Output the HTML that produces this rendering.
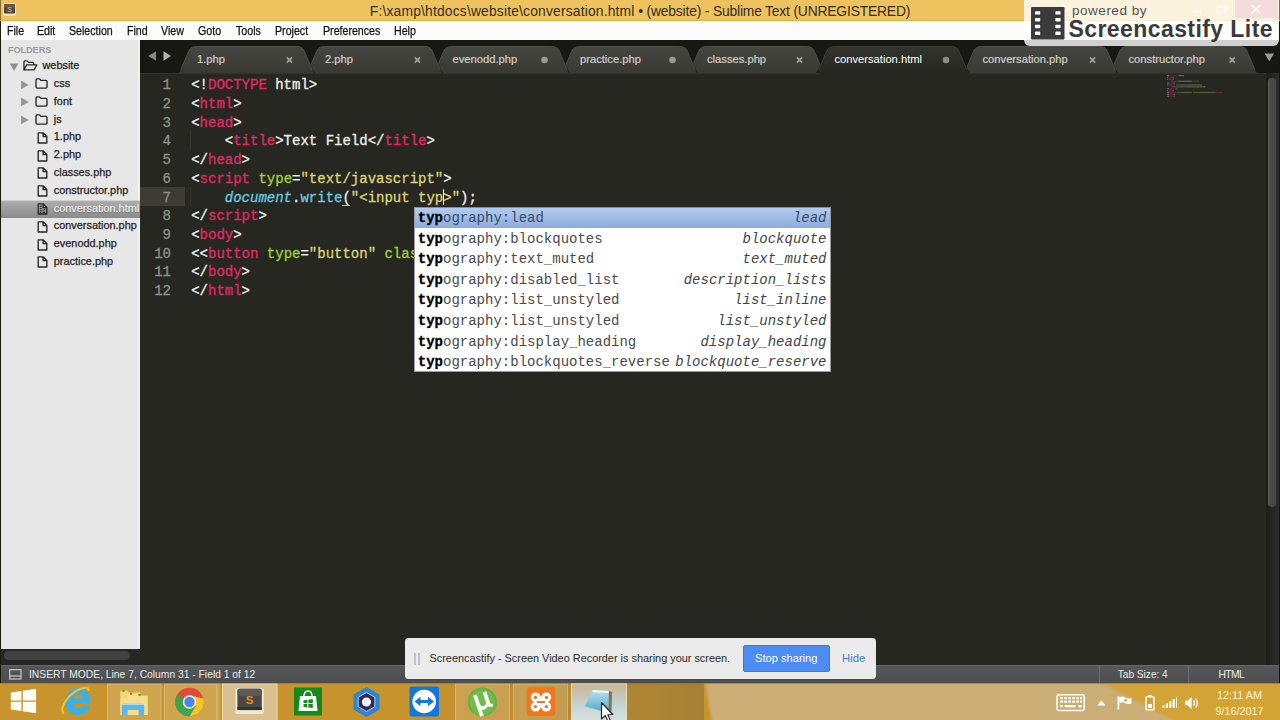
<!DOCTYPE html>
<html><head><meta charset="utf-8">
<style>
*{box-sizing:border-box;margin:0;padding:0}
html,body{width:1280px;height:720px;overflow:hidden;background:#252720;font-family:"Liberation Sans",sans-serif;}
.abs{position:absolute}
#title{left:0;top:0;width:1280px;height:21.2px;background:#EEC35F;}
#title .t{position:absolute;left:0;width:1280px;top:3.3px;text-align:center;font-size:13.83px;color:#332e20;}
#menu{left:1px;top:21.2px;width:1278px;height:19px;background:#fbfbfb;font-size:12.1px;color:#111}
#menu span{position:absolute;top:2.9px;transform:scaleX(0.879);transform-origin:0 0;-webkit-text-stroke:0.25px #111}
#side{left:1px;top:40px;width:139px;height:608.7px;background:#e7e7e7;font-size:10.9px;color:#1e1e1e;overflow:hidden}
#side .row{position:absolute;left:0;width:139px;height:17.8px;line-height:15.4px;white-space:nowrap}
#side .row span{position:absolute;-webkit-text-stroke:0.25px #1e1e1e}
#side .row.sel{background:linear-gradient(#adadad,#8a8a8a);box-shadow:0 -0.7px 0 #c8c8c8}
#side .row.sel span{color:#f0f0f0;-webkit-text-stroke:0.15px #f0f0f0;text-shadow:0 1px 1px rgba(0,0,0,.25)}
#sidescroll{left:1px;top:648.7px;width:139px;height:16.3px;background:#262624}
#sidescroll div{position:absolute;left:3px;top:2.5px;width:125.5px;height:9.3px;border-radius:4.6px;background:#424240}
#tabs{left:140px;top:40px;width:1139px;height:33px;background:#171814}
.tl{font-size:11.2px;white-space:nowrap;-webkit-text-stroke:0.2px}
#code{left:140px;top:76.1px;width:1000px;font-family:"Liberation Mono",monospace;font-size:14px;line-height:18.74px;color:#f0f0ea;white-space:pre;-webkit-text-stroke:0.3px}
#code .ln{display:inline-block;width:31px;text-align:right;color:#8f908a;margin-right:20.2px}
.p{color:#e02a66}.g{color:#a3d03a}.y{color:#ddd47c}.b{color:#6ccbe0;font-style:italic}.bb{color:#6ccbe0}
#status{left:1px;top:664.5px;width:1278px;height:18px;background:linear-gradient(#565759,#4c4d4f);border-top:1px solid #66676a;color:#ececec;font-size:10.3px}
#status span{position:absolute;top:3px;white-space:nowrap}
#task{left:0;top:682.5px;width:1280px;height:37.5px;background:#c6932d;overflow:hidden}

#pop{left:413.5px;top:206.8px;width:417px;height:165.4px;background:#fff;border:1px solid #9a9a9a;border-top-color:#7f8fa8;font-family:"Liberation Mono",monospace;font-size:14px;color:#4a4a4a;overflow:hidden}
#pop .r{position:absolute;left:0;width:415px;height:20.6px;line-height:20.6px;white-space:pre}
#pop .r b{color:#000;-webkit-text-stroke:0.3px #000}
#pop .r i{position:absolute;right:3px;top:0.9px;color:#444}
#pop .r span{position:absolute;left:3.3px;top:0.9px}
#pop .r.s{background:linear-gradient(#b4ccef,#8cacdd);color:#3a4a66}
#pop .r.s i{color:#3a4a66}
#banner{left:404.5px;top:638px;width:471.5px;height:40.5px;background:#ebebeb;border-radius:3.5px;font-size:10.9px;color:#2a2a2a;box-shadow:0 0 1px rgba(0,0,0,.3)}
#banner span{position:absolute;white-space:nowrap}
#stop{position:absolute;left:338px;top:7px;width:87.5px;height:26.5px;background:#4c8df4;border-radius:2px;border:1px solid #3b78de;color:#fff;text-align:center;line-height:25.5px;font-size:11.1px}

#ov{left:1023.5px;top:-6px;width:255px;height:51.5px;background:rgba(255,255,255,.8);border-radius:6px}
#ov .pb{position:absolute;left:48.5px;top:8.9px;font-size:13.6px;color:#555;letter-spacing:0.47px;white-space:nowrap}
#ov .sc{position:absolute;left:45px;top:22.2px;font-size:23px;font-weight:bold;color:#3a3a3a;letter-spacing:0.42px;white-space:nowrap}
</style></head><body>
<svg width="0" height="0" style="position:absolute"><defs>
<linearGradient id="gi" x1="0" y1="0" x2="0" y2="1"><stop offset="0" stop-color="#45463f"/><stop offset="1" stop-color="#383933"/></linearGradient>
<linearGradient id="ga" x1="0" y1="0" x2="0" y2="1"><stop offset="0" stop-color="#34352e"/><stop offset="1" stop-color="#252720"/></linearGradient>
</defs></svg>
<div id="title" class="abs"><svg class="abs" style="left:2.8px;top:3.2px" width="13" height="13" viewBox="0 0 13 13"><rect x="0.3" y="0.3" width="12.4" height="12.4" rx="1.2" fill="#efe4c4"/><rect x="1" y="1" width="11" height="9.6" rx="1" fill="#4a4844"/><rect x="1" y="1" width="11" height="3.4" rx="1" fill="#5d5a54"/><text x="6.5" y="9" font-family="Liberation Sans" font-weight="bold" font-size="7.5" fill="#e8962a" text-anchor="middle">S</text></svg><div class="t"><span style="letter-spacing:0.18px">F:\xamp\htdocs\website\conversation.html</span><span style="letter-spacing:-0.17px"> • (website) - Sublime Text (UNREGISTERED)</span></div></div>
<div id="menu" class="abs">
<span style="left:5.8px">File</span><span style="left:36px">Edit</span><span style="left:67.8px">Selection</span><span style="left:125.8px">Find</span><span style="left:160.2px">View</span><span style="left:197px">Goto</span><span style="left:234.5px">Tools</span><span style="left:274px">Project</span><span style="left:322px">Preferences</span><span style="left:393px">Help</span>
</div>
<div id="side" class="abs"><div class="abs" style="left:137.4px;top:0;width:1.6px;height:608.7px;background:#f1f1ed"></div><div class="abs" style="left:7px;top:4.5px;font-size:9.2px;color:#9b9b9b;font-weight:bold;letter-spacing:-0.1px">FOLDERS</div><div class="row" style="top:17.6px"><svg class="abs" style="left:8.4px;top:5.6px" width="10.6" height="9" viewBox="0 0 10 9"><path d="M0.5,0.5 L9,0.5 L4.75,8 Z" fill="#8e8e8e"/></svg><svg class="abs" style="left:22.1px;top:2.9px" width="15" height="11" viewBox="0 0 16 11" preserveAspectRatio="none"><path d="M1,9.6 L1,2 Q1,0.9 2.1,0.9 L4.4,0.9 L5.6,2.3 L10.4,2.3 Q11.4,2.3 11.4,3.4 L11.4,4.6 M1,9.8 L3.8,4.8 L14.8,4.8 L11.8,9.9 L1,9.9 Z" fill="none" stroke="#262626" stroke-width="1.35" stroke-linejoin="round"/></svg><span style="left:41.5px">website</span></div><div class="row" style="top:35.9px"><svg class="abs" style="left:19.4px;top:3.7px" width="9.8" height="9.8" viewBox="0 0 9 9"><path d="M1,0.5 L8,4.5 L1,8.5 Z" fill="#979797"/></svg><svg class="abs" style="left:34.2px;top:2.4px" width="13" height="11" viewBox="0 0 13 11"><path d="M1,2.2 Q1,0.9 2.2,0.9 L4.6,0.9 L5.8,2.4 L10.8,2.4 Q12,2.4 12,3.6 L12,9 Q12,10.1 10.8,10.1 L2.2,10.1 Q1,10.1 1,9 Z" fill="none" stroke="#262626" stroke-width="1.35" stroke-linejoin="round"/></svg><span style="left:52.8px">css</span></div><div class="row" style="top:53.7px"><svg class="abs" style="left:19.4px;top:3.7px" width="9.8" height="9.8" viewBox="0 0 9 9"><path d="M1,0.5 L8,4.5 L1,8.5 Z" fill="#979797"/></svg><svg class="abs" style="left:34.2px;top:2.4px" width="13" height="11" viewBox="0 0 13 11"><path d="M1,2.2 Q1,0.9 2.2,0.9 L4.6,0.9 L5.8,2.4 L10.8,2.4 Q12,2.4 12,3.6 L12,9 Q12,10.1 10.8,10.1 L2.2,10.1 Q1,10.1 1,9 Z" fill="none" stroke="#262626" stroke-width="1.35" stroke-linejoin="round"/></svg><span style="left:52.8px">font</span></div><div class="row" style="top:71.5px"><svg class="abs" style="left:19.4px;top:3.7px" width="9.8" height="9.8" viewBox="0 0 9 9"><path d="M1,0.5 L8,4.5 L1,8.5 Z" fill="#979797"/></svg><svg class="abs" style="left:34.2px;top:2.4px" width="13" height="11" viewBox="0 0 13 11"><path d="M1,2.2 Q1,0.9 2.2,0.9 L4.6,0.9 L5.8,2.4 L10.8,2.4 Q12,2.4 12,3.6 L12,9 Q12,10.1 10.8,10.1 L2.2,10.1 Q1,10.1 1,9 Z" fill="none" stroke="#262626" stroke-width="1.35" stroke-linejoin="round"/></svg><span style="left:52.8px">js</span></div><div class="row" style="top:89.3px"><svg class="abs" style="left:35.8px;top:2.5px" width="11" height="12" viewBox="0 0 11 12"><path d="M1.2,0.9 L6.3,0.9 L9.8,4.4 L9.8,11 L1.2,11 Z M6.1,1 L6.1,4.6 L9.7,4.6" fill="none" stroke="#262626" stroke-width="1.35" stroke-linejoin="round"/></svg><span style="left:52.8px">1.php</span></div><div class="row" style="top:107.1px"><svg class="abs" style="left:35.8px;top:2.5px" width="11" height="12" viewBox="0 0 11 12"><path d="M1.2,0.9 L6.3,0.9 L9.8,4.4 L9.8,11 L1.2,11 Z M6.1,1 L6.1,4.6 L9.7,4.6" fill="none" stroke="#262626" stroke-width="1.35" stroke-linejoin="round"/></svg><span style="left:52.8px">2.php</span></div><div class="row" style="top:124.9px"><svg class="abs" style="left:35.8px;top:2.5px" width="11" height="12" viewBox="0 0 11 12"><path d="M1.2,0.9 L6.3,0.9 L9.8,4.4 L9.8,11 L1.2,11 Z M6.1,1 L6.1,4.6 L9.7,4.6" fill="none" stroke="#262626" stroke-width="1.35" stroke-linejoin="round"/></svg><span style="left:52.8px">classes.php</span></div><div class="row" style="top:142.7px"><svg class="abs" style="left:35.8px;top:2.5px" width="11" height="12" viewBox="0 0 11 12"><path d="M1.2,0.9 L6.3,0.9 L9.8,4.4 L9.8,11 L1.2,11 Z M6.1,1 L6.1,4.6 L9.7,4.6" fill="none" stroke="#262626" stroke-width="1.35" stroke-linejoin="round"/></svg><span style="left:52.8px">constructor.php</span></div><div class="row sel" style="top:160.5px"><svg class="abs" style="left:35.8px;top:2.5px" width="11" height="12" viewBox="0 0 11 12"><path d="M1.2,0.9 L6.3,0.9 L9.8,4.4 L9.8,11 L1.2,11 Z M6.1,1 L6.1,4.6 L9.7,4.6" fill="none" stroke="#262626" stroke-width="1.35" stroke-linejoin="round"/><path d="M2.8,3.4 h2 M2.8,5.6 h2 M2.8,7.8 h2.4 M6.2,7.4 l1.8,-1.2 M2.8,9.6 h1.4 M5.6,9.4 h2.6" stroke="#262626" stroke-width="1.1" fill="none"/></svg><span style="left:52.8px">conversation.html</span></div><div class="row" style="top:178.3px"><svg class="abs" style="left:35.8px;top:2.5px" width="11" height="12" viewBox="0 0 11 12"><path d="M1.2,0.9 L6.3,0.9 L9.8,4.4 L9.8,11 L1.2,11 Z M6.1,1 L6.1,4.6 L9.7,4.6" fill="none" stroke="#262626" stroke-width="1.35" stroke-linejoin="round"/></svg><span style="left:52.8px">conversation.php</span></div><div class="row" style="top:196.1px"><svg class="abs" style="left:35.8px;top:2.5px" width="11" height="12" viewBox="0 0 11 12"><path d="M1.2,0.9 L6.3,0.9 L9.8,4.4 L9.8,11 L1.2,11 Z M6.1,1 L6.1,4.6 L9.7,4.6" fill="none" stroke="#262626" stroke-width="1.35" stroke-linejoin="round"/></svg><span style="left:52.8px">evenodd.php</span></div><div class="row" style="top:213.9px"><svg class="abs" style="left:35.8px;top:2.5px" width="11" height="12" viewBox="0 0 11 12"><path d="M1.2,0.9 L6.3,0.9 L9.8,4.4 L9.8,11 L1.2,11 Z M6.1,1 L6.1,4.6 L9.7,4.6" fill="none" stroke="#262626" stroke-width="1.35" stroke-linejoin="round"/></svg><span style="left:52.8px">practice.php</span></div></div>
<div id="sidescroll" class="abs"><div></div></div>
<div id="tabs" class="abs"></div>
<svg class="abs" style="left:148px;top:50.3px" width="24" height="12" viewBox="0 0 24 12"><path d="M0.5,6 L8,1.2 L8,10.8 Z" fill="#8a8a85"/><path d="M23,6 L15.5,1.2 L15.5,10.8 Z" fill="#b4b4ae"/></svg>
<svg class="abs" style="left:1108.5px;top:45.5px" width="148.7" height="27" viewBox="0 0 148.7 27"><path d="M0,27 C1.3,27 2,25.8 2.8,23.8 L10.6,5.2 C12,2 14,0.5 18.5,0.5 L130.2,0.5 C134.7,0.5 136.7,2 138.1,5.2 L145.89999999999998,23.8 C146.7,25.8 147.39999999999998,27 148.7,27 Z" fill="url(#gi)" stroke="#14150f" stroke-width="1.6" stroke-opacity=".8" paint-order="stroke"/><path d="M2.8,23.8 L10.6,5.2 C12,2 14,0.5 18.5,0.5 L130.2,0.5 C134.7,0.5 136.7,2 138.1,5.2 L145.89999999999998,23.8" fill="none" stroke="#4a4b45" stroke-width="1"/><path d="M120.6,11.4 L125.79999999999998,16.6 M125.79999999999998,11.4 L120.6,16.6" stroke="#a4a49e" stroke-width="1.7" fill="none"/></svg><div class="abs tl" style="left:1128.5px;top:53px;color:#d0d0cb;">constructor.php</div><svg class="abs" style="left:962.5px;top:45.5px" width="155" height="27" viewBox="0 0 155 27"><path d="M0,27 C1.3,27 2,25.8 2.8,23.8 L10.6,5.2 C12,2 14,0.5 18.5,0.5 L136.5,0.5 C141,0.5 143,2 144.4,5.2 L152.2,23.8 C153,25.8 153.7,27 155,27 Z" fill="url(#gi)" stroke="#14150f" stroke-width="1.6" stroke-opacity=".8" paint-order="stroke"/><path d="M2.8,23.8 L10.6,5.2 C12,2 14,0.5 18.5,0.5 L136.5,0.5 C141,0.5 143,2 144.4,5.2 L152.2,23.8" fill="none" stroke="#4a4b45" stroke-width="1"/><path d="M126.9,11.4 L132.1,16.6 M132.1,11.4 L126.9,16.6" stroke="#a4a49e" stroke-width="1.7" fill="none"/></svg><div class="abs tl" style="left:982.5px;top:53px;color:#d0d0cb;">conversation.php</div><svg class="abs" style="left:687.5px;top:45.5px" width="137" height="27" viewBox="0 0 137 27"><path d="M0,27 C1.3,27 2,25.8 2.8,23.8 L10.6,5.2 C12,2 14,0.5 18.5,0.5 L118.5,0.5 C123,0.5 125,2 126.4,5.2 L134.2,23.8 C135,25.8 135.7,27 137,27 Z" fill="url(#gi)" stroke="#14150f" stroke-width="1.6" stroke-opacity=".8" paint-order="stroke"/><path d="M2.8,23.8 L10.6,5.2 C12,2 14,0.5 18.5,0.5 L118.5,0.5 C123,0.5 125,2 126.4,5.2 L134.2,23.8" fill="none" stroke="#4a4b45" stroke-width="1"/><path d="M108.9,11.4 L114.1,16.6 M114.1,11.4 L108.9,16.6" stroke="#a4a49e" stroke-width="1.7" fill="none"/></svg><div class="abs tl" style="left:707.0px;top:53px;color:#d0d0cb;">classes.php</div><svg class="abs" style="left:560.5px;top:45.5px" width="137" height="27" viewBox="0 0 137 27"><path d="M0,27 C1.3,27 2,25.8 2.8,23.8 L10.6,5.2 C12,2 14,0.5 18.5,0.5 L118.5,0.5 C123,0.5 125,2 126.4,5.2 L134.2,23.8 C135,25.8 135.7,27 137,27 Z" fill="url(#gi)" stroke="#14150f" stroke-width="1.6" stroke-opacity=".8" paint-order="stroke"/><path d="M2.8,23.8 L10.6,5.2 C12,2 14,0.5 18.5,0.5 L118.5,0.5 C123,0.5 125,2 126.4,5.2 L134.2,23.8" fill="none" stroke="#4a4b45" stroke-width="1"/><circle cx="111.5" cy="14" r="3.3" fill="#9a9a94"/></svg><div class="abs tl" style="left:580.0px;top:53px;color:#d0d0cb;">practice.php</div><svg class="abs" style="left:433px;top:45.5px" width="137" height="27" viewBox="0 0 137 27"><path d="M0,27 C1.3,27 2,25.8 2.8,23.8 L10.6,5.2 C12,2 14,0.5 18.5,0.5 L118.5,0.5 C123,0.5 125,2 126.4,5.2 L134.2,23.8 C135,25.8 135.7,27 137,27 Z" fill="url(#gi)" stroke="#14150f" stroke-width="1.6" stroke-opacity=".8" paint-order="stroke"/><path d="M2.8,23.8 L10.6,5.2 C12,2 14,0.5 18.5,0.5 L118.5,0.5 C123,0.5 125,2 126.4,5.2 L134.2,23.8" fill="none" stroke="#4a4b45" stroke-width="1"/><circle cx="111.5" cy="14" r="3.3" fill="#9a9a94"/></svg><div class="abs tl" style="left:452.5px;top:53px;color:#d0d0cb;">evenodd.php</div><svg class="abs" style="left:305.5px;top:45.5px" width="137" height="27" viewBox="0 0 137 27"><path d="M0,27 C1.3,27 2,25.8 2.8,23.8 L10.6,5.2 C12,2 14,0.5 18.5,0.5 L118.5,0.5 C123,0.5 125,2 126.4,5.2 L134.2,23.8 C135,25.8 135.7,27 137,27 Z" fill="url(#gi)" stroke="#14150f" stroke-width="1.6" stroke-opacity=".8" paint-order="stroke"/><path d="M2.8,23.8 L10.6,5.2 C12,2 14,0.5 18.5,0.5 L118.5,0.5 C123,0.5 125,2 126.4,5.2 L134.2,23.8" fill="none" stroke="#4a4b45" stroke-width="1"/><path d="M108.9,11.4 L114.1,16.6 M114.1,11.4 L108.9,16.6" stroke="#a4a49e" stroke-width="1.7" fill="none"/></svg><div class="abs tl" style="left:325.0px;top:53px;color:#d0d0cb;">2.php</div><svg class="abs" style="left:177.5px;top:45.5px" width="137" height="27" viewBox="0 0 137 27"><path d="M0,27 C1.3,27 2,25.8 2.8,23.8 L10.6,5.2 C12,2 14,0.5 18.5,0.5 L118.5,0.5 C123,0.5 125,2 126.4,5.2 L134.2,23.8 C135,25.8 135.7,27 137,27 Z" fill="url(#gi)" stroke="#14150f" stroke-width="1.6" stroke-opacity=".8" paint-order="stroke"/><path d="M2.8,23.8 L10.6,5.2 C12,2 14,0.5 18.5,0.5 L118.5,0.5 C123,0.5 125,2 126.4,5.2 L134.2,23.8" fill="none" stroke="#4a4b45" stroke-width="1"/><path d="M108.9,11.4 L114.1,16.6 M114.1,11.4 L108.9,16.6" stroke="#a4a49e" stroke-width="1.7" fill="none"/></svg><div class="abs tl" style="left:197.0px;top:53px;color:#d0d0cb;">1.php</div><svg class="abs" style="left:816.2px;top:45.5px" width="153.6" height="27" viewBox="0 0 153.6 27"><path d="M0,27 C1.3,27 2,25.8 2.8,23.8 L10.6,5.2 C12,2 14,0.5 18.5,0.5 L135.1,0.5 C139.6,0.5 141.6,2 143.0,5.2 L150.79999999999998,23.8 C151.6,25.8 152.29999999999998,27 153.6,27 Z" fill="url(#ga)" stroke="#14150f" stroke-width="1.6" stroke-opacity=".8" paint-order="stroke"/><path d="M2.8,23.8 L10.6,5.2 C12,2 14,0.5 18.5,0.5 L135.1,0.5 C139.6,0.5 141.6,2 143.0,5.2 L150.79999999999998,23.8" fill="none" stroke="#3c3d37" stroke-width="1"/><circle cx="130.0" cy="14" r="3.3" fill="#8c8c86"/></svg><div class="abs tl" style="left:834.4000000000001px;top:53px;color:#ffffff;-webkit-text-stroke:0">conversation.html</div>
<div class="abs" style="left:140px;top:72.5px;width:1139px;height:1px;background:#31322c"></div><div class="abs" style="left:817.5px;top:72.3px;width:151px;height:1.4px;background:#252720"></div>
<div class="abs" style="left:140px;top:187.2px;width:45px;height:18.7px;background:#3d3c32"></div>
<div class="abs" style="left:190.3px;top:131px;width:1px;height:18.7px;background:#34352f"></div><div class="abs" style="left:190.3px;top:187.2px;width:1px;height:18.7px;background:#34352f"></div><div id="code" class="abs"><span class="ln">1</span>&lt;!<span class="p">DOCTYPE</span> html&gt;
<span class="ln">2</span>&lt;<span class="p">html</span>&gt;
<span class="ln">3</span>&lt;<span class="p">head</span>&gt;
<span class="ln">4</span>    &lt;<span class="p">title</span>&gt;Text Field&lt;/<span class="p">title</span>&gt;
<span class="ln">5</span>&lt;/<span class="p">head</span>&gt;
<span class="ln">6</span>&lt;<span class="p">script</span> <span class="g">type</span>=<span class="y">"text/javascript"</span>&gt;
<span class="ln">7</span>    <span class="b">document</span>.<span class="bb">write</span>(<span class="y">"&lt;input typ&gt;"</span>);
<span class="ln">8</span>&lt;/<span class="p">script</span>&gt;
<span class="ln">9</span>&lt;<span class="p">body</span>&gt;
<span class="ln">10</span>&lt;&lt;<span class="p">button</span> <span class="g">type</span>=<span class="y">"button"</span> <span class="g">clas</span>
<span class="ln">11</span>&lt;/<span class="p">body</span>&gt;
<span class="ln">12</span>&lt;/<span class="p">html</span>&gt;
</div>
<div id="pop" class="abs"><div class="r s" style="top:-0.6px"><span><b>typ</b>ography:lead</span><i>lead</i></div><div class="r" style="top:20.0px"><span><b>typ</b>ography:blockquotes</span><i>blockquote</i></div><div class="r" style="top:40.6px"><span><b>typ</b>ography:text_muted</span><i>text_muted</i></div><div class="r" style="top:61.2px"><span><b>typ</b>ography:disabled_list</span><i>description_lists</i></div><div class="r" style="top:81.8px"><span><b>typ</b>ography:list_unstyled</span><i>list_inline</i></div><div class="r" style="top:102.4px"><span><b>typ</b>ography:list_unstyled</span><i>list_unstyled</i></div><div class="r" style="top:123.0px"><span><b>typ</b>ography:display_heading</span><i>display_heading</i></div><div class="r" style="top:143.6px"><span><b>typ</b>ography:blockquotes_reverse</span><i>blockquote_reserve</i></div></div>
<div id="status" class="abs"><span style="left:28px">INSERT MODE, Line 7, Column 31 - Field 1 of 12</span><span style="left:1116.8px;font-size:10.1px">Tab Size: 4</span><span style="left:1217.5px;letter-spacing:-0.6px">HTML</span></div>
<svg class="abs" style="left:1263.5px;top:53px" width="11" height="9" viewBox="0 0 11 9"><path d="M0.5,0.5 L10,0.5 L5.25,8.2 Z" fill="#9c9c96"/></svg>
<div class="abs" style="left:1265.5px;top:73px;width:13.5px;height:591.5px;background:linear-gradient(to right,#1c1d19,#2d2d2b)"></div>
<div class="abs" style="left:1268.3px;top:77.5px;width:7.6px;height:429px;border-radius:3.8px;background:linear-gradient(to right,#5c5c5a,#484846 30%,#454543)"></div>
<div class="abs" style="left:1279px;top:21px;width:1px;height:662px;background:#15150f"></div>
<div class="abs" style="left:0px;top:21px;width:1px;height:699px;background:#1a1912"></div>
<div class="abs" style="left:0px;top:0px;width:1px;height:21px;background:#8a6f30"></div><div class="abs" style="left:1279px;top:0px;width:1px;height:21px;background:#8a6f30"></div>
<div class="abs" style="left:0px;top:20px;width:1280px;height:1.2px;background:#ddb04c"></div>
<svg class="abs" style="left:1166.5px;top:73.6px;opacity:.42" width="60" height="24" viewBox="0 0 60 24"><rect x="0.00" y="1.00" width="2.26" height="1.3" fill="#b8b8b0"/><rect x="2.26" y="1.00" width="7.91" height="1.3" fill="#b8285a"/><rect x="11.30" y="1.00" width="4.52" height="1.3" fill="#b8b8b0"/><rect x="15.82" y="1.00" width="1.13" height="1.3" fill="#b8b8b0"/><rect x="0.00" y="2.87" width="1.13" height="1.3" fill="#b8b8b0"/><rect x="1.13" y="2.87" width="4.52" height="1.3" fill="#b8285a"/><rect x="5.65" y="2.87" width="1.13" height="1.3" fill="#b8b8b0"/><rect x="0.00" y="4.74" width="1.13" height="1.3" fill="#b8b8b0"/><rect x="1.13" y="4.74" width="4.52" height="1.3" fill="#b8285a"/><rect x="5.65" y="4.74" width="1.13" height="1.3" fill="#b8b8b0"/><rect x="4.52" y="6.61" width="1.13" height="1.3" fill="#b8b8b0"/><rect x="5.65" y="6.61" width="5.65" height="1.3" fill="#b8285a"/><rect x="11.30" y="6.61" width="13.56" height="1.3" fill="#b8b8b0"/><rect x="24.86" y="6.61" width="5.65" height="1.3" fill="#b8285a"/><rect x="30.51" y="6.61" width="1.13" height="1.3" fill="#b8b8b0"/><rect x="0.00" y="8.48" width="2.26" height="1.3" fill="#b8b8b0"/><rect x="2.26" y="8.48" width="4.52" height="1.3" fill="#b8285a"/><rect x="6.78" y="8.48" width="1.13" height="1.3" fill="#b8b8b0"/><rect x="0.00" y="10.35" width="1.13" height="1.3" fill="#b8b8b0"/><rect x="1.13" y="10.35" width="6.78" height="1.3" fill="#b8285a"/><rect x="9.04" y="10.35" width="4.52" height="1.3" fill="#7a9a30"/><rect x="13.56" y="10.35" width="1.13" height="1.3" fill="#b8b8b0"/><rect x="14.69" y="10.35" width="19.21" height="1.3" fill="#a8a060"/><rect x="33.90" y="10.35" width="1.13" height="1.3" fill="#b8b8b0"/><rect x="4.52" y="12.22" width="9.04" height="1.3" fill="#4a98a8"/><rect x="13.56" y="12.22" width="1.13" height="1.3" fill="#b8b8b0"/><rect x="14.69" y="12.22" width="5.65" height="1.3" fill="#4a98a8"/><rect x="20.34" y="12.22" width="1.13" height="1.3" fill="#b8b8b0"/><rect x="21.47" y="12.22" width="14.69" height="1.3" fill="#a8a060"/><rect x="36.16" y="12.22" width="2.26" height="1.3" fill="#b8b8b0"/><rect x="0.00" y="14.09" width="2.26" height="1.3" fill="#b8b8b0"/><rect x="2.26" y="14.09" width="6.78" height="1.3" fill="#b8285a"/><rect x="9.04" y="14.09" width="1.13" height="1.3" fill="#b8b8b0"/><rect x="0.00" y="15.96" width="1.13" height="1.3" fill="#b8b8b0"/><rect x="1.13" y="15.96" width="4.52" height="1.3" fill="#b8285a"/><rect x="5.65" y="15.96" width="1.13" height="1.3" fill="#b8b8b0"/><rect x="0.00" y="17.83" width="2.26" height="1.3" fill="#b8b8b0"/><rect x="2.26" y="17.83" width="6.78" height="1.3" fill="#b8285a"/><rect x="10.17" y="17.83" width="4.52" height="1.3" fill="#7a9a30"/><rect x="14.69" y="17.83" width="1.13" height="1.3" fill="#b8b8b0"/><rect x="15.82" y="17.83" width="9.04" height="1.3" fill="#a8a060"/><rect x="25.99" y="17.83" width="5.65" height="1.3" fill="#7a9a30"/><rect x="31.64" y="17.83" width="1.13" height="1.3" fill="#b8b8b0"/><rect x="32.77" y="17.83" width="14.69" height="1.3" fill="#a8a060"/><rect x="47.46" y="17.83" width="1.13" height="1.3" fill="#b8b8b0"/><rect x="48.59" y="17.83" width="1.13" height="1.3" fill="#b8285a"/><rect x="50.85" y="17.83" width="4.52" height="1.3" fill="#b8285a"/><rect x="0.00" y="19.70" width="2.26" height="1.3" fill="#b8b8b0"/><rect x="2.26" y="19.70" width="4.52" height="1.3" fill="#b8285a"/><rect x="6.78" y="19.70" width="1.13" height="1.3" fill="#b8b8b0"/><rect x="0.00" y="21.57" width="2.26" height="1.3" fill="#b8b8b0"/><rect x="2.26" y="21.57" width="4.52" height="1.3" fill="#b8285a"/><rect x="6.78" y="21.57" width="1.13" height="1.3" fill="#b8b8b0"/></svg>
<svg class="abs" style="left:9px;top:669px" width="13" height="11" viewBox="0 0 13 11"><rect x="0.7" y="0.7" width="11.3" height="9.3" fill="none" stroke="#c8c8c8" stroke-width="1.2"/><path d="M0.7,7 h11.3" stroke="#c8c8c8" stroke-width="1.2"/></svg>
<div class="abs" style="left:1098.5px;top:665px;width:1px;height:18px;background:#6c6d6e"></div>
<div class="abs" style="left:1187.5px;top:665px;width:1px;height:18px;background:#6c6d6e"></div>
<div class="abs" style="left:442.9px;top:188.5px;width:1.4px;height:16.5px;background:#f8f8f0"></div>
<div class="abs" style="left:342.3px;top:204.6px;width:8px;height:1.2px;background:#c8c8c0"></div>
<div id="banner" class="abs"><div class="abs" style="left:9.3px;top:14.5px;width:1.8px;height:12px;background:#c2c2c2"></div><div class="abs" style="left:13.3px;top:14.5px;width:1.8px;height:12px;background:#c2c2c2"></div><span style="left:25px;top:14.4px">Screencastify - Screen Video Recorder is sharing your screen.</span><div id="stop">Stop sharing</div><span style="left:437.5px;top:14.2px;color:#4a7bd0;font-size:11.3px">Hide</span></div>
<div id="task" class="abs"><svg class="abs" style="left:0;top:0" width="1280" height="37.5" viewBox="0 682.5 1280 37.5">
<defs>
<linearGradient id="tg1" x1="0" y1="0" x2="1" y2="0"><stop offset="0" stop-color="#c7942d"/><stop offset="0.6" stop-color="#c6932d"/><stop offset="0.8" stop-color="#b88a31"/><stop offset="1" stop-color="#a58137"/></linearGradient>
<linearGradient id="hov" x1="0" y1="0" x2="0" y2="1"><stop offset="0" stop-color="#c9b58e"/><stop offset="0.55" stop-color="#c4d2d0"/><stop offset="1" stop-color="#d6e2e2"/></linearGradient>
<linearGradient id="np" x1="0" y1="0" x2="0" y2="1"><stop offset="0" stop-color="#b8e0ee"/><stop offset="1" stop-color="#4fa8cc"/></linearGradient>
</defs>
<rect x="0" y="682" width="704" height="38" fill="url(#tg1)"/>
<filter id="bl" x="-5%" y="-50%" width="110%" height="200%"><feGaussianBlur stdDeviation="1.6"/></filter><g filter="url(#bl)"><path d="M703,670 L1078,670 L1200,733 L714,733 Z" fill="#caae76"/>
<path d="M1078,670 L1300,670 L1300,733 L1200,733 Z" fill="#d3a336"/></g>
<rect x="0" y="682.5" width="1280" height="1" fill="#8c6e30" opacity=".55"/>
<!-- windows logo -->
<path d="M10.8,692 L21.4,690.4 L21.4,699.9 L10.8,699.9 Z M22.8,690.2 L36.1,688.3 L36.1,699.9 L22.8,699.9 Z M10.8,701.2 L21.4,701.2 L21.4,710.6 L10.8,709.1 Z M22.8,701.2 L36.1,701.2 L36.1,712.7 L22.8,710.8 Z" fill="#fffdf4"/>
<!-- IE -->
<g>
<g transform="translate(77.8,701.7) scale(1.24) translate(-76.3,-703)"><path d="M66.5,702 A10,10 0 1 1 86.2,704 L72.5,704 A4.6,4.6 0 0 0 80.8,706.2 L86,706.2 A10,10 0 0 1 66.5,702 Z M72.4,699.8 L80.8,699.8 A4.3,4.3 0 0 0 72.4,699.8 Z" fill="#35b2ec"/></g>
<path d="M63.2,712.6 C59.5,707 68,694.5 78,689.5 C84,686.5 88.5,686.6 88.6,689.6" fill="none" stroke="#f5c030" stroke-width="2" stroke-linecap="round"/>
</g>
<!-- explorer button -->
<rect x="107.5" y="683.6" width="53.5" height="37" fill="#fff" fill-opacity=".16" stroke="#fff" stroke-opacity=".28" stroke-width="1"/>
<g>
<path d="M120.3,690.2 L127.5,690.2 L129,692 L140,692 L140,712 L120.3,712 Z" fill="#f2d677"/>
<path d="M127,693 L135.5,693 L137,695 L147.8,695 L147.8,714.4 L120.3,714.4 L120.3,698 L127,698 Z" fill="#f6df8b"/>
<rect x="122.4" y="689.6" width="2.2" height="1.7" fill="#3f9a3f"/><rect x="130" y="692.4" width="2.2" height="1.7" fill="#d84a30"/><rect x="138.4" y="693.6" width="2.2" height="1.7" fill="#3f9a3f"/>
<path d="M121.8,704.4 L144.2,704.4 L144.2,715 L138.6,715 L138.6,709.4 L127.6,709.4 L127.6,715 L121.8,715 Z" fill="#62b6e4"/>
<path d="M123.4,702.6 L142.6,702.6 L144.2,704.6 L121.8,704.6 Z" fill="#a6dcf4"/>
</g>
<!-- chrome button -->
<rect x="164.5" y="683.6" width="52" height="37" fill="#fff" fill-opacity=".16" stroke="#fff" stroke-opacity=".28" stroke-width="1"/>
<rect x="217.5" y="683.6" width="2" height="37" fill="#cfa253" stroke="#d6b06c" stroke-width=".6"/>
<g>
<circle cx="189.5" cy="701.5" r="14.3" fill="#e24a3a"/>
<path d="M189.5,701.5 L177.1,694.4 A14.3,14.3 0 0 0 189.8,715.8 L196,705.2 Z" fill="#3fa548"/>
<path d="M189.5,701.5 L195.8,705.5 L189.6,715.8 A14.3,14.3 0 0 0 203.4,698 L190,695 Z" fill="#f6c629"/>
<circle cx="189.5" cy="701.5" r="6.7" fill="#f4f4f4"/>
<circle cx="189.5" cy="701.5" r="5.2" fill="#4a86e8"/>
</g>
<!-- sublime button (active) -->
<rect x="222.5" y="683.6" width="54.5" height="37" fill="#dbc08f" stroke="#ecd9b0" stroke-width="1"/>
<g>
<rect x="235.4" y="687.6" width="28.4" height="26" rx="2.6" fill="#f1e8d4"/>
<rect x="237.4" y="688.2" width="24.4" height="21.4" rx="2.2" fill="#4a4946"/>
<rect x="237.4" y="688.2" width="24.4" height="7" rx="2.2" fill="#5b5a56"/>
<rect x="237.4" y="706.6" width="24.4" height="3" fill="#33322f"/>
<text x="249.6" y="703.6" font-family="Liberation Sans" font-weight="bold" font-size="11.5" fill="#e38d20" text-anchor="middle">S</text>
</g>
<!-- store -->
<rect x="294" y="687" width="28" height="28" fill="#158a1c"/>
<path d="M300,695.5 L316,695.5 L317.5,710.5 L298.5,710.5 Z" fill="#fff"/>
<path d="M303.8,697 Q303.8,690.5 308,690.5 Q312.2,690.5 312.2,697" fill="none" stroke="#fff" stroke-width="1.4"/>
<path d="M303.5,699.8 L307.4,699.3 L307.4,702.6 L303.5,702.6 Z M308.4,699.2 L312.8,698.6 L312.8,702.6 L308.4,702.6 Z M303.5,703.6 L307.4,703.6 L307.4,706.9 L303.5,706.4 Z M308.4,703.6 L312.8,703.6 L312.8,707.6 L308.4,707 Z" fill="#158a1c"/>
<!-- blue hex -->
<path d="M366.5,686.5 L379.5,694 L379.5,709 L366.5,716.5 L353.5,709 L353.5,694 Z" fill="#2b86d2"/>
<path d="M366.5,692 L374.8,696.8 L374.8,706.2 L366.5,711 L358.2,706.2 L358.2,696.8 Z" fill="#2d2a66" stroke="#dfe8f4" stroke-width=".8"/>
<circle cx="366.5" cy="701.5" r="4.6" fill="#f4f4f8"/>
<!-- teamviewer -->
<rect x="409.5" y="686" width="29.5" height="30" rx="2.5" fill="#0f78dc"/>
<circle cx="424.2" cy="701" r="11.8" fill="#fff"/>
<path d="M414.5,701 L420.5,696.3 L420.5,699.6 L428,699.6 L428,696.3 L434,701 L428,705.7 L428,702.4 L420.5,702.4 L420.5,705.7 Z" fill="#0f78dc"/>
<!-- utorrent -->
<rect x="455.5" y="683.6" width="54" height="37" fill="#fff" fill-opacity=".16" stroke="#fff" stroke-opacity=".28" stroke-width="1"/>
<circle cx="482.3" cy="701.5" r="14.6" fill="#66b044"/><circle cx="482.3" cy="701.5" r="12.6" fill="#72bb4c"/>
<g transform="rotate(-18 482.3 701.5)"><path d="M475.6,692.6 L479.4,692.6 L479.4,702.4 Q479.4,705.8 482.6,705.8 Q485.6,705.8 485.6,702.4 L485.6,692.6 L489.4,692.6 L489.4,704.4 Q489.4,706.2 491.4,706.4 L491.4,709 Q487.6,709.4 486.4,707.4 Q484.8,709.2 482,709.2 Q480.2,709.2 479.4,708.4 L479.4,715.4 L475.6,714.6 Z" fill="#fbfff4"/></g>
<!-- xampp -->
<rect x="513.5" y="683.6" width="54" height="37" fill="#fff" fill-opacity=".16" stroke="#fff" stroke-opacity=".28" stroke-width="1"/>
<rect x="526.6" y="686.4" width="28.6" height="29.2" rx="3.6" fill="#f1761c"/>
<g fill="#fff"><circle cx="535.6" cy="696.8" r="4.9"/><circle cx="546.2" cy="696.8" r="4.9"/><circle cx="535.6" cy="706.2" r="4.9"/><circle cx="546.2" cy="706.2" r="4.9"/><rect x="534" y="696" width="14" height="11"/></g>
<g fill="#f1761c"><circle cx="535.4" cy="696.9" r="1.7"/><circle cx="546.4" cy="696.9" r="1.7"/><circle cx="535.4" cy="706.1" r="1.7"/><circle cx="546.4" cy="706.1" r="1.7"/><rect x="536.6" y="700.4" width="8.6" height="2.2" rx="1"/><path d="M540.9,691.2 l1.6,2 l-1.6,2 l-1.6,-2 Z M540.9,707.8 l1.6,2 l-1.6,2 l-1.6,-2 Z M529.6,701.5 l1.6,-1.6 l1.2,1.6 l-1.2,1.6 Z M552.2,701.5 l-1.6,-1.6 l-1.2,1.6 l1.2,1.6 Z"/></g>
<!-- hover notepad -->
<rect x="571.5" y="683.4" width="55" height="37" fill="url(#hov)" stroke="#e2dcc8" stroke-width="1"/>
<path d="M592.8,689.4 L608.9,690.6 L608.5,712.5 L584.7,705.8 Z" fill="url(#np)"/>
<path d="M592.8,689.4 L608.9,690.6 L608.8,692.6 L591.8,691.4 Z" fill="#eef6fa"/>
<path d="M608.9,690.6 L612,691.5 L611.5,711 L608.5,712.5 Z" fill="#77756a"/>
<!-- cursor -->
<path d="M601.5,702 L601.5,718.5 L605.3,715 L607.8,720.5 L610.2,719.5 L607.8,714.2 L612.8,714 Z" fill="#fff" stroke="#222" stroke-width="1.1" stroke-linejoin="round"/>
<!-- tray: keyboard -->
<rect x="1057" y="694.3" width="27.2" height="15.6" rx="1.6" fill="none" stroke="#fff" stroke-width="1.5"/>
<path d="M1060.3,697.6 h2.6 M1064.3,697.6 h2.6 M1068.3,697.6 h2.6 M1072.3,697.6 h2.6 M1076.3,697.6 h2.6 M1080,697.6 h1.8 M1060.3,701.2 h2.6 M1064.3,701.2 h2.6 M1068.3,701.2 h2.6 M1072.3,701.2 h2.6 M1076.3,701.2 h2.6 M1080,701.2 h1.8 M1060.3,705.6 h2.6 M1064.6,705.6 h11.2 M1078,705.6 h3.6" stroke="#fff" stroke-width="2.3" fill="none"/>
<!-- up arrow -->
<path d="M1097.2,705 L1101.4,700 L1105.6,705 Z" fill="#fff"/>
<!-- flag -->
<path d="M1118.4,695.8 L1118.4,709" stroke="#fff" stroke-width="1.7" fill="none"/>
<path d="M1119.4,696.6 Q1122.5,695.4 1125,697 Q1128,698.8 1131.4,697.6 L1131.4,703 Q1128,704.4 1125,702.6 Q1122.5,701.2 1119.4,702.4 Z" fill="#fff"/>
<rect x="1124.2" y="698.8" width="3" height="2.2" fill="#cfa443"/>
<!-- battery -->
<rect x="1146" y="696.2" width="8" height="13.2" rx="1.2" fill="none" stroke="#fff" stroke-width="1.4"/>
<rect x="1148.2" y="694.6" width="3.6" height="1.8" fill="#fff"/>
<rect x="1148" y="703.6" width="4" height="3.8" fill="#fff"/>
<!-- signal -->
<path d="M1162.4,707.2 v-2.2 h2.2 v2.2 Z M1165.8,707.2 v-4.2 h2.2 v4.2 Z M1169.2,707.2 v-6.4 h2.2 v6.4 Z M1172.6,707.2 v-8.6 h2.2 v8.6 Z M1176,707.2 v-10.8 h1 v10.8 Z" fill="#fff"/>
<!-- speaker -->
<path d="M1185,700.2 L1187.6,700.2 L1191.6,696.6 L1191.6,708.4 L1187.6,704.8 L1185,704.8 Z" fill="#fff"/>
<path d="M1193.6,699.6 Q1195.4,702.5 1193.6,705.4 M1195.8,697.8 Q1198.6,702.5 1195.8,707.2" stroke="#fff" stroke-width="1.2" fill="none"/>
<text x="1239.5" y="698.6" font-family="Liberation Sans" font-size="10.8" fill="#fdf3cf" text-anchor="middle">12:11 AM</text>
<text x="1239.5" y="714.3" font-family="Liberation Sans" font-size="10.8" fill="#fdf3cf" text-anchor="middle">9/16/2017</text>
</svg>
</div>
<div class="abs" style="left:1235px;top:0;width:42.5px;height:18px;background:#c9534f"></div>
<svg class="abs" style="left:1190px;top:2px" width="80" height="16" viewBox="0 0 80 16"><path d="M3,9.5 h8" stroke="#fff" stroke-width="1.6"/><path d="M27.5,5.5 h7.5 v6 h-7.5 Z M29.5,5.5 v-2 h7.5 v6 h-2" fill="none" stroke="#fff" stroke-width="1.1"/><path d="M62,3.2 l8,8 M70,3.2 l-8,8" stroke="#fff" stroke-width="1.6"/></svg>
<div id="ov" class="abs"><svg class="abs" style="left:7px;top:12.5px" width="34" height="33" viewBox="0 0 34 33"><rect x="0" y="0" width="33.5" height="32.5" rx="1.2" fill="#3b3b3b"/><g fill="#fff"><rect x="4" y="4.2" width="5.2" height="3.4" rx=".6"/><rect x="4" y="11" width="5.2" height="3.4" rx=".6"/><rect x="4" y="17.8" width="5.2" height="3.4" rx=".6"/><rect x="4" y="24.6" width="5.2" height="3.4" rx=".6"/><rect x="24.4" y="4.2" width="5.2" height="3.4" rx=".6"/><rect x="24.4" y="11" width="5.2" height="3.4" rx=".6"/><rect x="24.4" y="17.8" width="5.2" height="3.4" rx=".6"/><rect x="24.4" y="24.6" width="5.2" height="3.4" rx=".6"/></g></svg><div class="pb">powered by</div><div class="sc">Screencastify Lite</div></div>
</body></html>
